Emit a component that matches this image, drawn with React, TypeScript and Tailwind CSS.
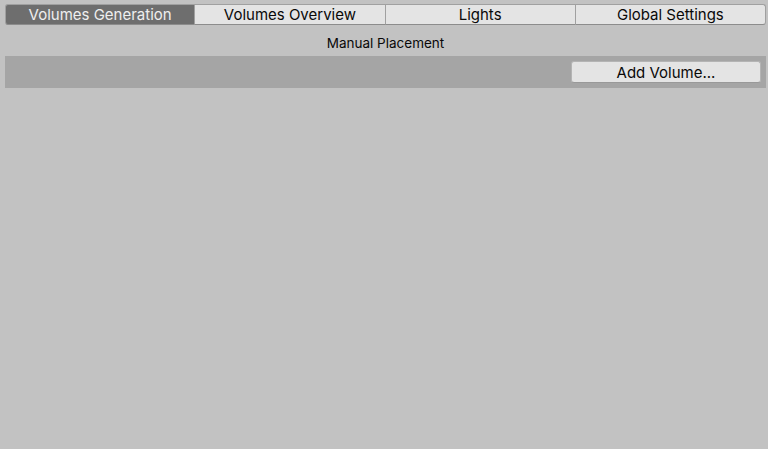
const tabs = ["Volumes Generation", "Volumes Overview", "Lights", "Global Settings"];

export default function App() {
  const active = 0;

  return (
    <div
      className="w-[768px] h-[449px] bg-[#c2c2c2] pl-[5px] pr-[2px] pt-[4px] text-[#090909] overflow-hidden"
      style={{ fontFamily: "Inter, 'Noto Sans', sans-serif" }}
    >
      {/* Toolbar tabs */}
      <div className="grid grid-cols-4 h-[21px]">
        {tabs.map((t, i) => (
          <div
            key={t}
            className={
              "flex items-center justify-center text-[15px] leading-none border border-[#a0a0a0] border-b-[#8c8c8c] " +
              (i === active
                ? "bg-[#6e6e6e] text-[#efefef] rounded-l-[3px] border-[#6a6a6a]"
                : "bg-[#e4e4e4] -ml-[1px]") +
              (i === tabs.length - 1 ? " rounded-r-[3px]" : "")
            }
          >
            {t}
          </div>
        ))}
      </div>

      {/* Section label */}
      <div className="mt-[10px] h-[17px] leading-[17px] text-center text-[13.5px]">
        Manual Placement
      </div>

      {/* Placement bar */}
      <div className="mt-[4px] h-[32px] bg-[#a5a5a5] flex items-center justify-end pr-[5px]">
        <button className="w-[190px] h-[22px] bg-[#e4e4e4] border border-[#b4b4b4] border-b-[#999999] rounded-[3px] text-[15px] leading-none text-[#090909]">
          Add Volume...
        </button>
      </div>
    </div>
  );
}
